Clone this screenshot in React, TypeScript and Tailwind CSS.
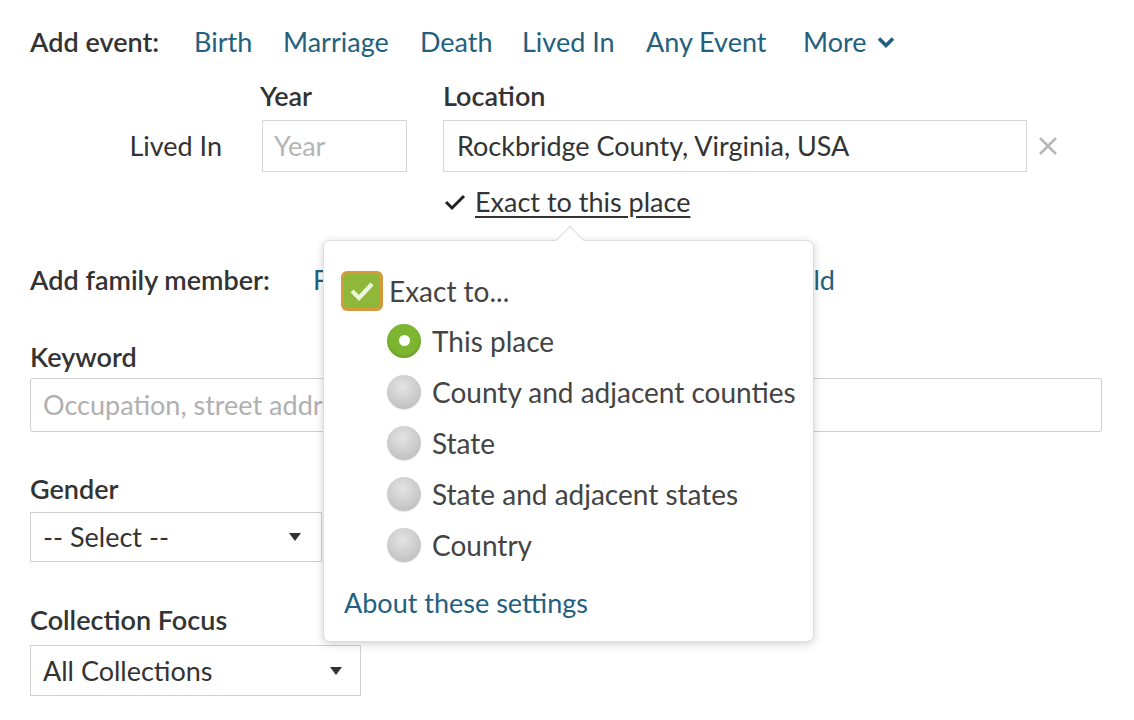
import React from "react";

const link = "text-[#23607f]";

function Radio({ selected }: { selected?: boolean }) {
  if (selected) {
    return (
      <div className="w-[34px] h-[34px] rounded-full bg-[#7db530] flex items-center justify-center shadow-[inset_0_-2px_3px_rgba(0,0,0,0.15)]">
        <div className="w-[11px] h-[11px] rounded-full bg-white" />
      </div>
    );
  }
  return (
    <div className="w-[34px] h-[34px] rounded-full bg-[radial-gradient(circle_at_45%_35%,#e4e4e4,#c4c4c4_70%,#b8b8b8)] shadow-[0_1px_1px_rgba(0,0,0,0.1)]" />
  );
}

function Caret() {
  return (
    <svg width="12" height="8" viewBox="0 0 12 8">
      <path d="M0 0 L12 0 L6 8 Z" fill="#333" />
    </svg>
  );
}

export default function App() {
  return (
    <div
      className="relative w-[1134px] h-[720px] bg-white text-[#333] text-[27px] leading-[32px] overflow-hidden"
      style={{ fontFamily: "Lato, 'Open Sans', sans-serif" }}
    >
      <div className="pl-[30px]">
        {/* Add event row */}
        <div className="mt-[26px] h-[32px] flex items-center">
          <span className="font-semibold w-[164px]">Add event:</span>
          <div className={`flex items-center ${link}`}>
            <span className="w-[89px]">Birth</span>
            <span className="w-[137px]">Marriage</span>
            <span className="w-[102px]">Death</span>
            <span className="w-[124px]">Lived In</span>
            <span className="w-[157px]">Any Event</span>
            <span className="flex items-center gap-[10px]">
              More
              <svg width="18" height="13" viewBox="0 0 18 13">
                <path d="M2 2.5 L9 9.5 L16 2.5" stroke="#23607f" strokeWidth="3.6" fill="none" />
              </svg>
            </span>
          </div>
        </div>

        {/* Labels */}
        <div className="mt-[22px] h-[32px] flex items-center">
          <div className="w-[230px]" />
          <span className="w-[183px] font-semibold">Year</span>
          <span className="font-semibold">Location</span>
        </div>

        {/* Inputs */}
        <div className="mt-[8px] flex items-center">
          <div className="w-[232px] pr-[40px] text-right">Lived In</div>
          <div className="w-[145px] h-[52px] border border-[#d6d6d6] flex items-center px-[11px] text-[#b5b5b5]">
            Year
          </div>
          <div className="w-[36px]" />
          <div className="w-[584px] h-[52px] border border-[#d6d6d6] flex items-center px-[13px]">
            Rockbridge County, Virginia, USA
          </div>
          <svg className="ml-[10px]" width="22" height="22" viewBox="0 0 22 22">
            <path d="M3 3 L19 19 M19 3 L3 19" stroke="#b8b8b8" strokeWidth="2.6" />
          </svg>
        </div>

        {/* Exact to this place */}
        <div className="mt-[14px] h-[32px] flex items-center pl-[414px]">
          <svg width="22" height="18" viewBox="0 0 22 18">
            <path d="M2 9 L8 15 L20 3" stroke="#222" strokeWidth="3" fill="none" />
          </svg>
          <span className="ml-[9px] underline underline-offset-[4px]">Exact to this place</span>
        </div>

        {/* Add family member */}
        <div className="mt-[46px] h-[32px] flex items-center">
          <span className="font-semibold w-[283px]">Add family member:</span>
          <div className={`w-[522px] flex items-center justify-between ${link}`}>
            <span>Father</span>
            <span>Mother</span>
            <span>Spouse</span>
            <span>Sibling</span>
            <span>Child</span>
          </div>
        </div>

        {/* Keyword */}
        <div className="mt-[45px] h-[32px] flex items-center font-semibold">Keyword</div>
        <div className="mt-[5px] w-[1072px] h-[54px] border border-[#d0d0d0] rounded-[2px] flex items-center px-[12px] text-[#b0b0b0]">
          Occupation, street address, etc.
        </div>

        {/* Gender */}
        <div className="mt-[41px] h-[32px] flex items-center font-semibold">Gender</div>
        <div className="mt-[7px] w-[292px] h-[50px] border border-[#d0d0d0] flex items-center justify-between pl-[12px] pr-[20px]">
          <span>-- Select --</span>
          <Caret />
        </div>

        {/* Collection Focus */}
        <div className="mt-[42px] h-[32px] flex items-center font-semibold">Collection Focus</div>
        <div className="mt-[9px] w-[331px] h-[51px] border border-[#d0d0d0] flex items-center justify-between pl-[12px] pr-[18px]">
          <span>All Collections</span>
          <Caret />
        </div>
      </div>

      {/* Popup */}
      <div className="absolute left-[323px] top-[240px] w-[491px] h-[402px] bg-white border border-[#dcdcdc] rounded-[7px] shadow-[0_2px_10px_rgba(0,0,0,0.18)]">
        <div className="absolute left-[236px] top-[-11px] w-[20px] h-[20px] bg-white border-t border-l border-[#dcdcdc] rotate-45" />
        <div className="relative pt-[30px] pl-[17px]">
          <div className="flex items-center h-[40px]">
            <div className="w-[42px] h-[40px] rounded-[6px] bg-[#8fb83a] border-[3px] border-[#d69a3c] flex items-center justify-center">
              <svg width="26" height="22" viewBox="0 0 26 22">
                <path d="M3 11 L10 18 L23 4" stroke="#eef6df" strokeWidth="4.2" fill="none" />
              </svg>
            </div>
            <span className="ml-[6px] text-[#444] text-[28px]">Exact to...</span>
          </div>
          <div className="flex flex-col mt-[4px]">
            {[
              { t: "This place", s: true },
              { t: "County and adjacent counties" },
              { t: "State" },
              { t: "State and adjacent states" },
              { t: "Country" },
            ].map((r) => (
              <div key={r.t} className="h-[51px] flex items-center pl-[46px]">
                <Radio selected={r.s} />
                <span className="ml-[11px] text-[28px] text-[#444]">{r.t}</span>
              </div>
            ))}
          </div>
          <div className={`mt-[17px] ml-[3px] h-[32px] flex items-center ${link} text-[27px]`}>
            About these settings
          </div>
        </div>
      </div>
    </div>
  );
}
